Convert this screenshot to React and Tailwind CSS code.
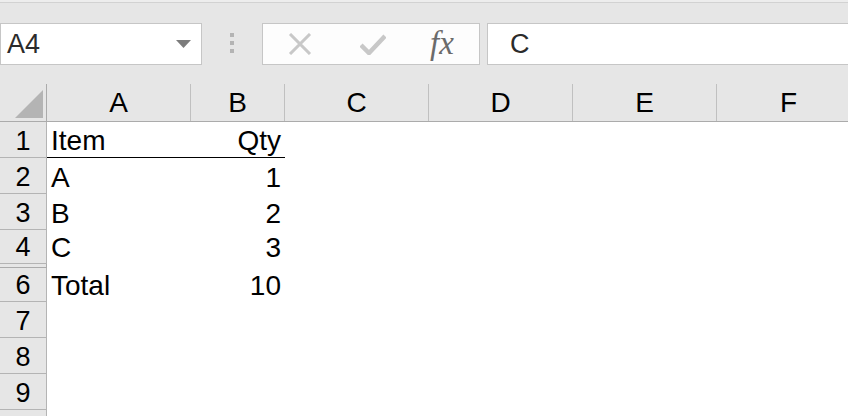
/**
 * Spreadsheet window: name box, formula bar and a small grid
 */
const columns = [
  { name: 'A', width: 'w-[144px]' },
  { name: 'B', width: 'w-[94px]' },
  { name: 'C', width: 'w-[144px]' },
  { name: 'D', width: 'w-[144px]' },
  { name: 'E', width: 'w-[144px]' },
  { name: 'F', width: 'w-[144px]' },
];

const rows = [
  { num: '1', item: 'Item', qty: 'Qty', height: 'h-[36px]', underline: true },
  { num: '2', item: 'A', qty: '1', height: 'h-[36px]' },
  { num: '3', item: 'B', qty: '2', height: 'h-[36px]' },
  { num: '4', item: 'C', qty: '3', height: 'h-[34px]' },
  { num: null, height: 'h-[4px]' },
  { num: '6', item: 'Total', qty: '10', height: 'h-[34px]' },
  { num: '7', height: 'h-[36px]' },
  { num: '8', height: 'h-[36px]' },
  { num: '9', height: 'h-[36px]' },
  { num: '', height: 'h-[36px]' },
];

function Row({ row }) {
  if (row.num === null) {
    // hidden row 5 shows as a double line
    return (
      <div className={`flex ${row.height}`}>
        <div className="w-[47px] shrink-0 bg-[#e6e6e6] border-r border-b border-[#ababab]" />
        <div className="flex-1 bg-white" />
      </div>
    );
  }
  return (
    <div className={`flex ${row.height}`}>
      <div className="w-[47px] shrink-0 bg-[#e6e6e6] border-r border-b border-[#b4b4b4] flex items-end justify-center text-[27px] leading-[32px] text-black">
        {row.num}
      </div>
      <div
        className={`w-[144px] shrink-0 flex items-end pl-[4px] text-[28px] leading-[32px] text-black ${
          row.underline ? 'border-b border-black' : ''
        }`}
      >
        {row.item}
      </div>
      <div
        className={`w-[94px] shrink-0 flex items-end justify-end pr-[4px] text-[28px] leading-[32px] text-black ${
          row.underline ? 'border-b border-black' : ''
        }`}
      >
        {row.qty}
      </div>
      <div className="flex-1 bg-white" />
    </div>
  );
}

export default function App() {
  return (
    <div className="w-[848px] h-[416px] overflow-hidden bg-white font-['Liberation_Sans',Arial,sans-serif]">
      {/* Top strip */}
      <div className="h-[3px] bg-[#ededed] border-b border-[#d2d2d2]" />

      {/* Name box + formula bar */}
      <div className="h-[81px] bg-[#e6e6e6] flex items-start pt-[20px]">
        <div className="w-[202px] h-[42px] shrink-0 bg-white border border-[#c6c6c6] flex items-center justify-between pl-[6px] pr-[10px]">
          <span className="text-[27px] text-[#2b2b2b]">A4</span>
          <svg width="15" height="8" viewBox="0 0 15 8">
            <path d="M0 0h15L7.5 8z" fill="#7c7c7c" />
          </svg>
        </div>

        <div className="w-[60px] shrink-0 flex flex-col items-center gap-[4px] pt-[10px]">
          <span className="w-[4px] h-[4px] bg-[#b4b4b4]" />
          <span className="w-[4px] h-[4px] bg-[#b4b4b4]" />
          <span className="w-[4px] h-[4px] bg-[#b4b4b4]" />
        </div>

        <div className="w-[218px] h-[42px] shrink-0 bg-[#fdfdfd] border border-[#c6c6c6] flex items-center">
          <svg className="ml-[25px]" width="24" height="22" viewBox="0 0 24 22">
            <path d="M2 1l20 20M22 1L2 21" stroke="#c8c8c8" strokeWidth="3" fill="none" />
          </svg>
          <svg className="ml-[48px]" width="26" height="21" viewBox="0 0 26 21">
            <path d="M1 11l8 8L25 2" stroke="#c8c8c8" strokeWidth="4.5" fill="none" strokeLinejoin="miter" />
          </svg>
          <span className="ml-[44px] font-['Liberation_Serif',serif] italic text-[33px] leading-none text-[#6b6b6b] -mt-[2px]">
            fx
          </span>
        </div>

        <div className="ml-[7px] flex-1 h-[42px] bg-white border-y border-l border-[#c6c6c6] flex items-center pl-[22px]">
          <span className="text-[27px] text-[#2b2b2b]">C</span>
        </div>
      </div>

      {/* Column headers */}
      <div className="flex h-[38px] bg-[#e6e6e6] border-b border-[#ababab]">
        <div className="w-[47px] shrink-0 border-r border-[#ababab] flex items-end justify-end pb-[3px] pr-[3px]">
          <svg width="28" height="28" viewBox="0 0 28 28">
            <path d="M28 0v28H0z" fill="#b4b4b4" />
          </svg>
        </div>
        {columns.map((col) => (
          <div
            key={col.name}
            className={`${col.width} shrink-0 border-r border-[#c0c0c0] flex items-end justify-center pb-[2px] text-[28px] leading-[32px] text-black`}
          >
            {col.name}
          </div>
        ))}
      </div>

      {/* Grid rows */}
      {rows.map((row, i) => (
        <Row key={i} row={row} />
      ))}
    </div>
  );
}
